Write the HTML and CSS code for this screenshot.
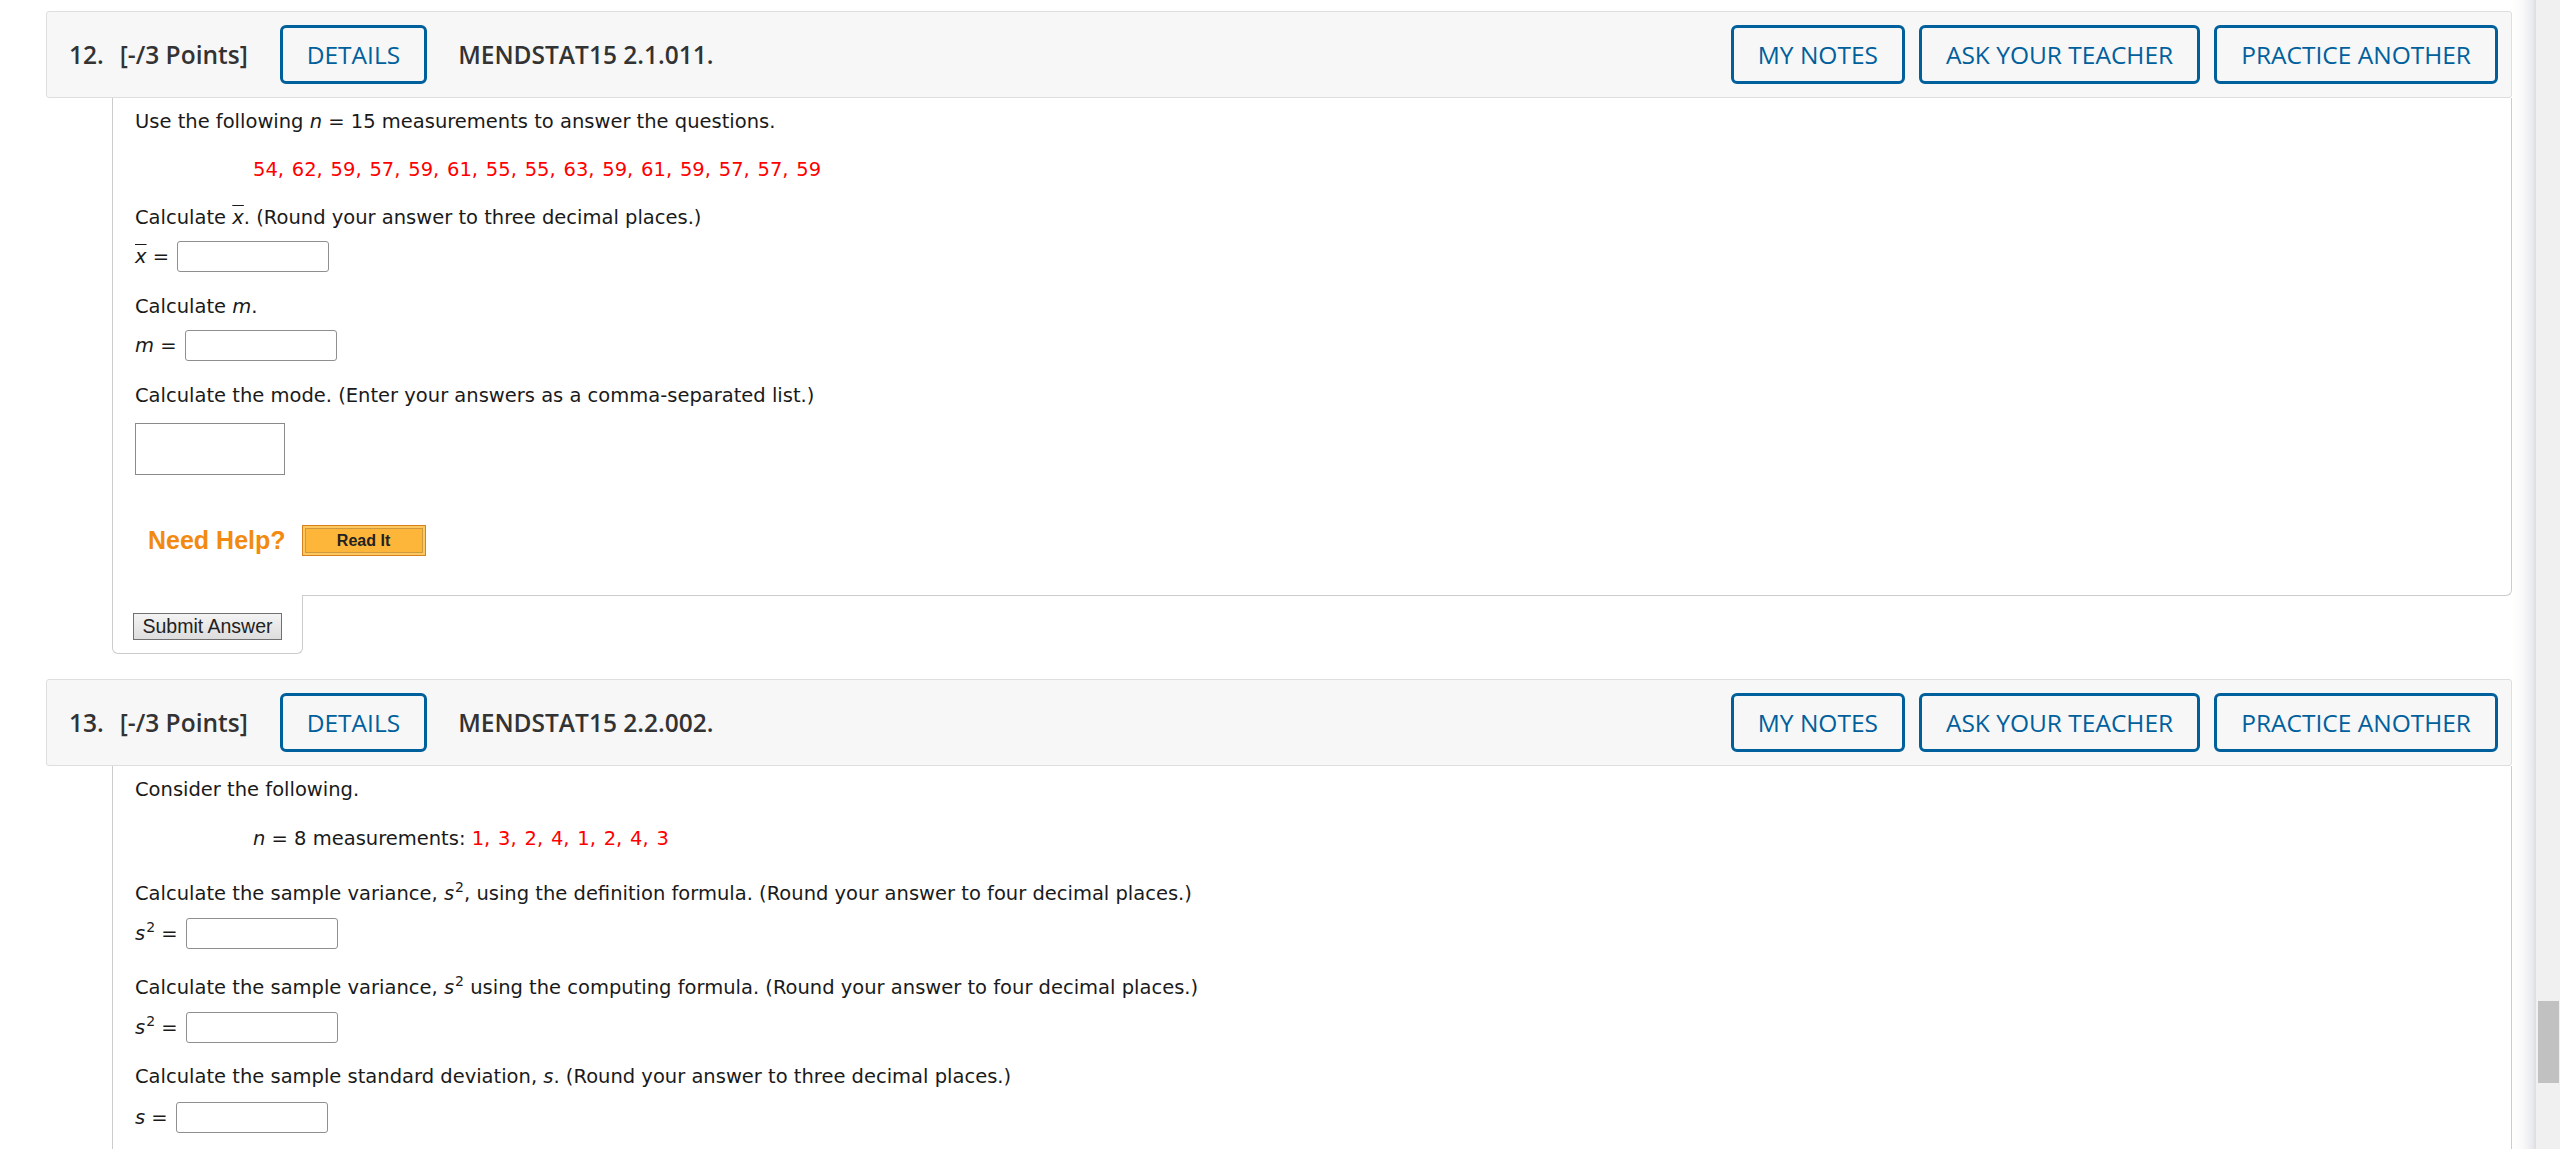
FILE: index.html
```html
<!DOCTYPE html>
<html lang="en">
<head>
<meta charset="utf-8">
<title>Questions</title>
<link rel="stylesheet" href="styles.css">
</head>
<body>
<div class="page">
  <main class="content">
    <section class="question">
      <header class="q-head">
        <span class="q-num">12.</span>
        <span class="q-pts">[-/3 Points]</span>
        <button class="hbtn details">DETAILS</button>
        <span class="q-code">MENDSTAT15 2.1.011.</span>
        <span class="spacer"></span>
        <div class="actions">
          <button class="hbtn">MY NOTES</button>
          <button class="hbtn">ASK YOUR TEACHER</button>
          <button class="hbtn">PRACTICE ANOTHER</button>
        </div>
      </header>
      <div class="q-body q12">
        <p class="line first">Use the following <i>n</i> = 15 measurements to answer the questions.</p>
        <p class="line data red list">54, 62, 59, 57, 59, 61, 55, 55, 63, 59, 61, 59, 57, 57, 59</p>
        <p class="line gap-t">Calculate <i class="bar">x</i>. (Round your answer to three decimal places.)</p>
        <div class="row"><span class="lbl"><i class="bar">x</i> =</span><span class="box"></span></div>
        <p class="line gap-a">Calculate <i>m</i>.</p>
        <div class="row"><span class="lbl"><i>m</i> =</span><span class="box"></span></div>
        <p class="line gap-a">Calculate the mode. (Enter your answers as a comma-separated list.)</p>
        <div class="bigbox"></div>
        <div class="help">
          <span class="need">Need Help?</span>
          <button class="readit">Read It</button>
        </div>
      </div>
      <div class="q-tab"><button class="submit">Submit Answer</button></div>
    </section>

    <section class="question second">
      <header class="q-head">
        <span class="q-num">13.</span>
        <span class="q-pts">[-/3 Points]</span>
        <button class="hbtn details">DETAILS</button>
        <span class="q-code">MENDSTAT15 2.2.002.</span>
        <span class="spacer"></span>
        <div class="actions">
          <button class="hbtn">MY NOTES</button>
          <button class="hbtn">ASK YOUR TEACHER</button>
          <button class="hbtn">PRACTICE ANOTHER</button>
        </div>
      </header>
      <div class="q-body q13">
        <p class="line first">Consider the following.</p>
        <p class="line data data2"><i>n</i> = 8 measurements: <span class="red list">1, 3, 2, 4, 1, 2, 4, 3</span></p>
        <p class="line gap-v1">Calculate the sample variance, <i>s</i><sup>2</sup>, using the definition formula. (Round your answer to four decimal places.)</p>
        <div class="row r13"><span class="lbl"><i>s</i><sup>2</sup> =</span><span class="box"></span></div>
        <p class="line gap-v2">Calculate the sample variance, <i>s</i><sup>2</sup> using the computing formula. (Round your answer to four decimal places.)</p>
        <div class="row r13"><span class="lbl"><i>s</i><sup>2</sup> =</span><span class="box"></span></div>
        <p class="line gap-v3">Calculate the sample standard deviation, <i>s</i>. (Round your answer to three decimal places.)</p>
        <div class="row r13b"><span class="lbl"><i>s</i> =</span><span class="box"></span></div>
      </div>
    </section>
  </main>
  <div class="shade"></div>
  <div class="scrollbar"><div class="thumb"></div></div>
</div>
</body>
</html>
```

FILE: styles.css
```css
* { box-sizing: border-box; }
html, body { margin: 0; padding: 0; background: #fff; }
body { font-family: "DejaVu Sans", Verdana, sans-serif; color: #1a1a1a; }

.page {
  display: flex;
  width: 2560px;
  height: 1149px;
  overflow: hidden;
}
.content {
  flex: 1;
  padding: 11px 0 0 46px;
  min-width: 0;
}
.shade {
  width: 24px;
  background: linear-gradient(to right, #ffffff 0%, #f9f9fa 45%, #e9eaee 85%, #dcdde2 100%);
}
.scrollbar {
  width: 24px;
  background: #f0f0f0;
  padding: 1001px 1px 0 2px;
}
.thumb {
  height: 82px;
  background: #c1c1c1;
}

/* header */
.q-head {
  display: flex;
  align-items: center;
  height: 87px;
  background: #f7f7f7;
  border: 1px solid #dedede;
  border-radius: 3px;
  padding: 0 13px 0 22px;
  font-family: "Open Sans", "Liberation Sans", sans-serif;
  font-size: 24.5px;
  color: #333;
}
.q-num, .q-pts, .q-code { font-weight: 600; white-space: nowrap; }
.q-pts { margin-left: 16px; }
.details { margin-left: 32px; }
.q-code { margin-left: 31px; }
.spacer { flex: 1; }
.actions { display: flex; gap: 14px; }
.hbtn {
  height: 59px;
  padding: 0 24px;
  border: 3px solid #00609c;
  border-radius: 6px;
  background: transparent;
  color: #00609c;
  font-family: "Open Sans", "Liberation Sans", sans-serif;
  font-size: 24.5px;
  font-weight: 400;
  white-space: nowrap;
}

/* body */
.q-body {
  margin-left: 66px;
  border: 1px solid #cccccc;
  border-top: none;
  border-bottom-right-radius: 6px;
  padding: 12px 22px 0 22px;
  font-size: 19.5px;
}
.q12 { padding-bottom: 39px; }
.q13 { border-bottom: none; padding-bottom: 40px; }

.line { margin: 0; line-height: 23px; white-space: nowrap; }
.red { color: #ff0000; }
.list { word-spacing: 1.6px; }
.data { margin-top: 25px; padding-left: 118px; }
.data2 { margin-top: 26px; }
.gap-t { margin-top: 25px; }
.gap-a { margin-top: 23px; }
.gap-v1 { margin-top: 32px; }
.gap-v2 { margin-top: 27px; }
.gap-v3 { margin-top: 22px; }

i { font-style: italic; }
.bar { text-decoration: overline; text-decoration-thickness: 1px; }
sup { font-size: 0.72em; line-height: 0; vertical-align: 0.6em; margin-left: 1px; }

.row {
  display: flex;
  align-items: center;
  height: 31px;
  margin-top: 12px;
}
.r13 { margin-top: 13px; }
.r13b { margin-top: 14px; }
.lbl { white-space: nowrap; }
.box {
  width: 152px;
  height: 31px;
  margin-left: 8px;
  border: 1px solid #8f8f8f;
  border-radius: 3px;
  background: #fff;
}
.bigbox {
  width: 150px;
  height: 52px;
  margin-top: 16px;
  border: 1px solid #8a8a8a;
  background: #fff;
}

.help {
  display: flex;
  align-items: center;
  height: 31px;
  margin-top: 50px;
  padding-left: 13px;
}
.need {
  font-family: "Liberation Sans", Arial, sans-serif;
  font-weight: 700;
  font-size: 25px;
  color: #f28a10;
}
.readit {
  width: 124px;
  height: 31px;
  margin-left: 16px;
  padding: 0;
  border: 1px solid #d9821d;
  background: #fdb63a;
  box-shadow: inset 0 0 0 2px #fdc860, inset 0 0 0 3px #cf9a3e;
  font-family: "Liberation Sans", Arial, sans-serif;
  font-weight: 700;
  font-size: 16px;
  color: #222;
}

.q-tab {
  width: 191px;
  margin-left: 66px;
  margin-top: -1px;
  background: #fff;
  border: 1px solid #cccccc;
  border-top: none;
  border-radius: 0 0 6px 6px;
  padding: 18px 0 13px 20px;
}
.submit {
  display: block;
  width: 149px;
  height: 27px;
  padding: 0;
  border: 1px solid #707070;
  background: linear-gradient(#f3f3f3, #dddddd);
  font-family: "Liberation Sans", Arial, sans-serif;
  font-size: 19.5px;
  color: #222;
}

.second { margin-top: 25px; }
```
